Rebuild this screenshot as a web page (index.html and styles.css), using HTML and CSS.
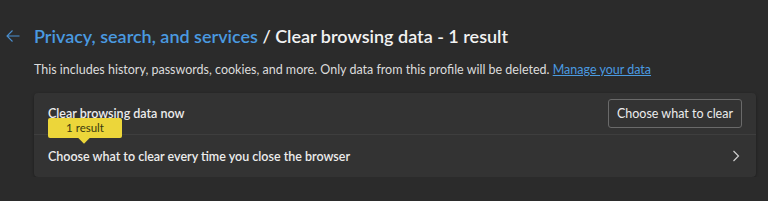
FILE: index.html
```html
<!DOCTYPE html>
<html>
<head>
<meta charset="utf-8">
<link rel="stylesheet" href="styles.css">
</head>
<body>
<div class="page">
  <div class="header">
    <button class="back" aria-label="Back">
      <svg width="14" height="12" viewBox="0 0 14 12"><path d="M13.5 6H1M6.5 0.5L1 6l5.5 5.5" fill="none" stroke="#4a8fd0" stroke-width="1.1"/></svg>
    </button>
    <h1 class="title"><span class="crumb">Privacy, search, and services</span> / Clear browsing data - 1 result</h1>
  </div>
  <p class="desc">This includes history, passwords, cookies, and more. Only data from this profile will be deleted. <a class="link" href="#">Manage your data</a></p>
  <div class="card">
    <div class="row">
      <span class="label">Clear browsing data now</span>
      <button class="btn">Choose what to clear</button>
    </div>
    <div class="row row2">
      <span class="label">Choose what to clear every time you close the browser</span>
      <svg class="chev" width="8" height="12" viewBox="0 0 8 12"><path d="M1.5 1l5 5-5 5" fill="none" stroke="#cfcfcf" stroke-width="1.2"/></svg>
      <div class="tip">1 result</div>
    </div>
  </div>
</div>
</body>
</html>
```
FILE: styles.css
```css
html, body {
  margin: 0;
  padding: 0;
  background: #2b2b2b;
  font-family: "Lato", "Noto Sans", sans-serif;
  color: #e6e6e6;
}
.page {
  padding: 22px 12px 0 0;
}
.header {
  display: flex;
  align-items: center;
}
.back {
  width: 34px;
  height: 28px;
  padding: 0 0 0 6px;
  background: none;
  border: 0;
  display: flex;
  align-items: center;
}
.title {
  margin: 0;
  font-size: 18px;
  font-weight: 600;
  line-height: 28px;
  color: #f2f2f2;
}
.crumb {
  color: #4a9ae0;
}
.desc {
  margin: 10px 0 0 34px;
  font-size: 12.5px;
  line-height: 20px;
  color: #dcdcdc;
}
.link {
  color: #4a9ae0;
  text-decoration: underline;
}
.card {
  margin: 13px 0 0 34px;
  background: #333333;
  border-radius: 4px;
  box-shadow: 0 1px 3px rgba(0,0,0,0.35);
}
.row {
  display: flex;
  align-items: center;
  justify-content: space-between;
  height: 41px;
  padding: 0 14px 0 14px;
}
.row2 {
  position: relative;
  height: 42px;
  border-top: 1px solid #3e3e3e;
}
.label {
  font-size: 12.5px;
  font-weight: 600;
  color: #ececec;
}
.btn {
  font-family: inherit;
  font-size: 12.5px;
  color: #ececec;
  background: #333;
  border: 1px solid #6a6a6a;
  border-radius: 3px;
  height: 29px;
  padding: 0 8px;
}
.chev {
  margin-right: 2px;
}
.tip {
  position: absolute;
  left: 14px;
  top: -17px;
  width: 74px;
  height: 20px;
  background: #ecd63a;
  color: #3a3a10;
  font-size: 11.5px;
  line-height: 20px;
  text-align: center;
  border-radius: 2px;
}
.tip::after {
  content: "";
  position: absolute;
  left: 32px;
  bottom: -4px;
  width: 8px;
  height: 8px;
  background: #ecd63a;
  transform: rotate(45deg);
}
```
